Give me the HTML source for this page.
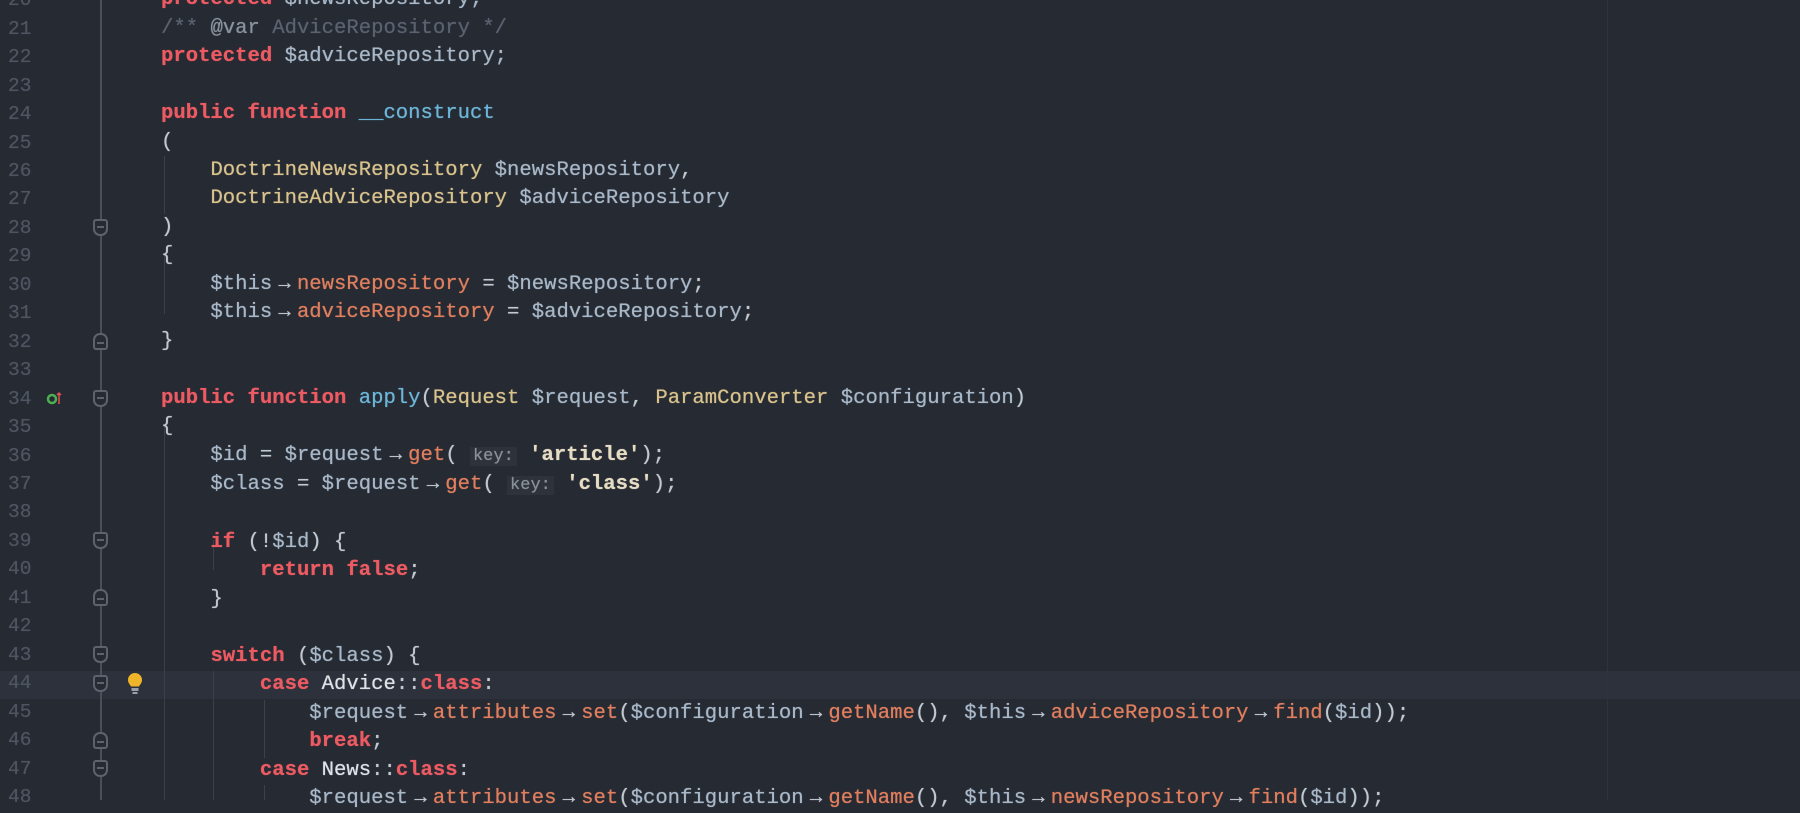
<!DOCTYPE html>
<html><head><meta charset="utf-8"><style>
html,body{margin:0;padding:0;}
body{width:1800px;height:800px;overflow:hidden;background:#262a33;position:relative;font-family:"Liberation Mono","DejaVu Sans Mono",monospace;}
.hl{position:absolute;left:0;right:0;top:671px;height:28px;background:#2c313b;}
.margin{position:absolute;left:1607px;top:0;bottom:0;width:1px;background:#2f333c;}
.fold{position:absolute;left:100px;top:0;bottom:0;width:1.5px;background:#4a4f58;}
.g{position:absolute;width:1px;background:#3b404a;}
.ln{position:absolute;left:8px;font-size:19.5px;color:#4f5560;line-height:28.45px;text-shadow:0 0 0.6px #4f5560;}
.c{position:absolute;left:161px;font-size:20.6px;line-height:28.45px;white-space:pre;color:#a8b8c8;text-shadow:0 0 0.7px currentColor;}
.k{color:#ec5a62;font-weight:bold}
.f{color:#6cb6d9}
.t{color:#d9c38c}
.m{color:#e07f5e}
.s{color:#e6dcc4;font-weight:bold}
.cm{color:#5a6270}
.p{color:#c0c8d0}
.w{color:#dfe3e8}
.a{display:inline-block;width:2ch;text-align:center;color:#c0c8d0}
.hint{color:#8a9099;background:#2d323b;font-size:17px;padding:0 3px;}
.fm{position:absolute;left:93px;width:15px;height:17px;border:2px solid #5d636c;border-radius:3px 3px 7px 7px;background:#262a33;box-sizing:border-box;}
.fm:after{content:"";position:absolute;left:2px;right:2px;top:5px;height:2px;background:#5d636c;}
.fe{border-radius:7px 7px 3px 3px;}
.fe:after{top:7px;}
</style></head><body>
<div class="hl"></div>
<div class="margin"></div>
<div class="fold"></div>
<div class="g" style="left:164px;top:156px;height:58px"></div>
<div class="g" style="left:164px;top:256px;height:58px"></div>
<div class="g" style="left:164px;top:426px;height:374px"></div>
<div class="g" style="left:213px;top:540px;height:30px"></div>
<div class="g" style="left:213px;top:671px;height:129px"></div>
<div class="g" style="left:264px;top:700px;height:58px"></div>
<div class="g" style="left:264px;top:785px;height:15px"></div>

<div class="ln" style="top:-13.7px">20<br>21<br>22<br>23<br>24<br>25<br>26<br>27<br>28<br>29<br>30<br>31<br>32<br>33<br>34<br>35<br>36<br>37<br>38<br>39<br>40<br>41<br>42<br>43<br>44<br>45<br>46<br>47<br>48</div>

<div class="fm" style="top:219px"></div>
<div class="fm fe" style="top:333px"></div>
<div class="fm" style="top:390px"></div>
<div class="fm" style="top:532px"></div>
<div class="fm fe" style="top:589px"></div>
<div class="fm" style="top:646px"></div>
<div class="fm" style="top:675px"></div>
<div class="fm fe" style="top:732px"></div>
<div class="fm" style="top:760px"></div>

<svg style="position:absolute;left:46px;top:390px" width="18" height="16"><circle cx="6" cy="9" r="4" fill="none" stroke="#4caf50" stroke-width="2.5"/><path d="M13 14V3M11 5l2-2 2 2" stroke="#e05050" stroke-width="1.5" fill="none"/></svg>
<svg style="position:absolute;left:125px;top:671px" width="20" height="26"><path d="M10 2a7 7 0 0 0-7 7c0 3 2 4.5 3 6.5h8c1-2 3-3.5 3-6.5a7 7 0 0 0-7-7z" fill="#f0b429"/><rect x="6.5" y="17" width="7" height="3" fill="#9aa0a8"/><rect x="7.5" y="21" width="5" height="2" fill="#9aa0a8"/></svg>

<div class="c" style="top:-13.7px"><span class="k">protected</span> $newsRepository;
<span class="cm">/** </span><span style="color:#8a939e">@var</span><span class="cm"> AdviceRepository */</span>
<span class="k">protected</span> $adviceRepository;

<span class="k">public function</span> <span class="f">__construct</span>
<span class="p">(</span>
    <span class="t">DoctrineNewsRepository</span> $newsRepository<span class="p">,</span>
    <span class="t">DoctrineAdviceRepository</span> $adviceRepository
<span class="p">)</span>
<span class="p">{</span>
    $this<span class="a">→</span><span class="m">newsRepository</span> <span class="p">=</span> $newsRepository<span class="p">;</span>
    $this<span class="a">→</span><span class="m">adviceRepository</span> <span class="p">=</span> $adviceRepository<span class="p">;</span>
<span class="p">}</span>

<span class="k">public function</span> <span class="f">apply</span><span class="p">(</span><span class="t">Request</span> $request<span class="p">,</span> <span class="t">ParamConverter</span> $configuration<span class="p">)</span>
<span class="p">{</span>
    $id <span class="p">=</span> $request<span class="a">→</span><span class="m">get</span><span class="p">(</span> <span class="hint">key:</span> <span class="s">'article'</span><span class="p">);</span>
    $class <span class="p">=</span> $request<span class="a">→</span><span class="m">get</span><span class="p">(</span> <span class="hint">key:</span> <span class="s">'class'</span><span class="p">);</span>

    <span class="k">if</span> <span class="p">(!</span>$id<span class="p">) {</span>
        <span class="k">return false</span><span class="p">;</span>
    <span class="p">}</span>

    <span class="k">switch</span> <span class="p">(</span>$class<span class="p">) {</span>
        <span class="k">case</span> <span class="w">Advice</span><span class="p">::</span><span class="k">class</span><span class="p">:</span>
            $request<span class="a">→</span><span class="m">attributes</span><span class="a">→</span><span class="m">set</span><span class="p">(</span>$configuration<span class="a">→</span><span class="m">getName</span><span class="p">(),</span> $this<span class="a">→</span><span class="m">adviceRepository</span><span class="a">→</span><span class="m">find</span><span class="p">(</span>$id<span class="p">));</span>
            <span class="k">break</span><span class="p">;</span>
        <span class="k">case</span> <span class="w">News</span><span class="p">::</span><span class="k">class</span><span class="p">:</span>
            $request<span class="a">→</span><span class="m">attributes</span><span class="a">→</span><span class="m">set</span><span class="p">(</span>$configuration<span class="a">→</span><span class="m">getName</span><span class="p">(),</span> $this<span class="a">→</span><span class="m">newsRepository</span><span class="a">→</span><span class="m">find</span><span class="p">(</span>$id<span class="p">));</span></div>
</body></html>
